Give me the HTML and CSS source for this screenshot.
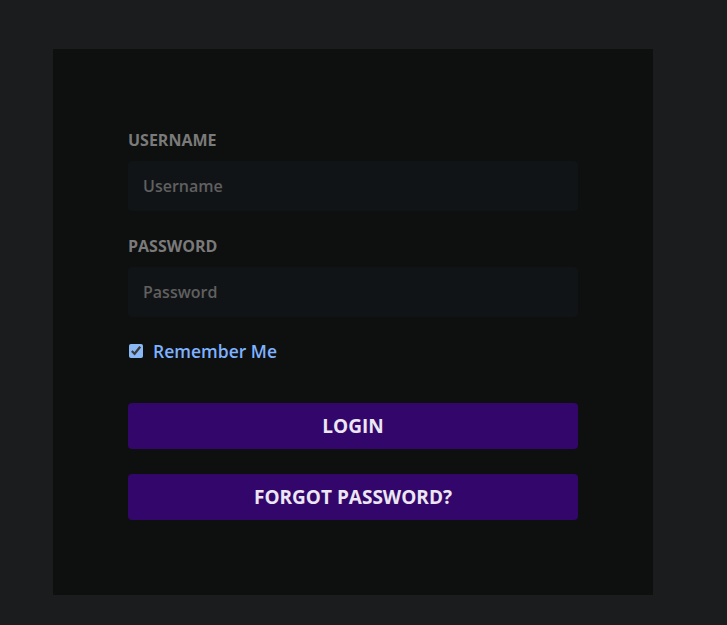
FILE: index.html
```html
<!DOCTYPE html>
<html lang="en">
<head>
  <meta charset="UTF-8" />
  <title>Login</title>
  <link rel="stylesheet" href="styles.css">
</head>
<body>
  <div class="card">
    <form class="login-form">
      <label class="field-label" for="username">USERNAME</label>
      <input class="field" id="username" type="text" placeholder="Username">

      <label class="field-label" for="password">PASSWORD</label>
      <input class="field" id="password" type="password" placeholder="Password">

      <label class="remember">
        <input type="checkbox" checked> Remember Me
      </label>

      <button type="button" class="btn btn-login">LOGIN</button>
      <button type="button" class="btn">FORGOT PASSWORD?</button>
    </form>
  </div>
</body>
</html>
```

FILE: styles.css
```css
html, body {
  margin: 0;
  padding: 0;
  background-color: #1b1c1e;
  font-family: "Open Sans", sans-serif;
}
.card {
  width: 600px;
  box-sizing: border-box;
  margin: 49px 0 0 53px;
  padding: 81px 75px 75px;
  background-color: #0e0f0f;
}
.login-form {
  display: flex;
  flex-direction: column;
}
.field-label {
  font-size: 16px;
  font-weight: 700;
  line-height: 20px;
  color: #7a7a7a;
  margin-bottom: 11px;
}
.field {
  height: 50px;
  box-sizing: border-box;
  padding: 0 15px;
  border: none;
  border-radius: 4px;
  background-color: #111416;
  color: #ccc;
  font-family: "Open Sans", sans-serif;
  font-size: 16px;
  font-weight: 600;
  margin-bottom: 25px;
  outline: none;
}
.field::placeholder {
  color: #606060;
}
.remember {
  display: flex;
  align-items: center;
  gap: 10px;
  font-size: 17.5px;
  font-weight: 600;
  line-height: 24px;
  color: #7fb2ff;
  margin-top: -3px;
  margin-bottom: 40px;
  padding-left: 1px;
}
.remember input {
  margin: 0;
  width: 14px;
  height: 14px;
  accent-color: #8ab8f5;
}
.btn {
  height: 46px;
  border: none;
  border-radius: 4px;
  background-color: #33066b;
  color: #ece6f2;
  font-family: "Open Sans", sans-serif;
  font-size: 19px;
  font-weight: 700;
  cursor: pointer;
}
.btn-login {
  margin-bottom: 25px;
}
```
